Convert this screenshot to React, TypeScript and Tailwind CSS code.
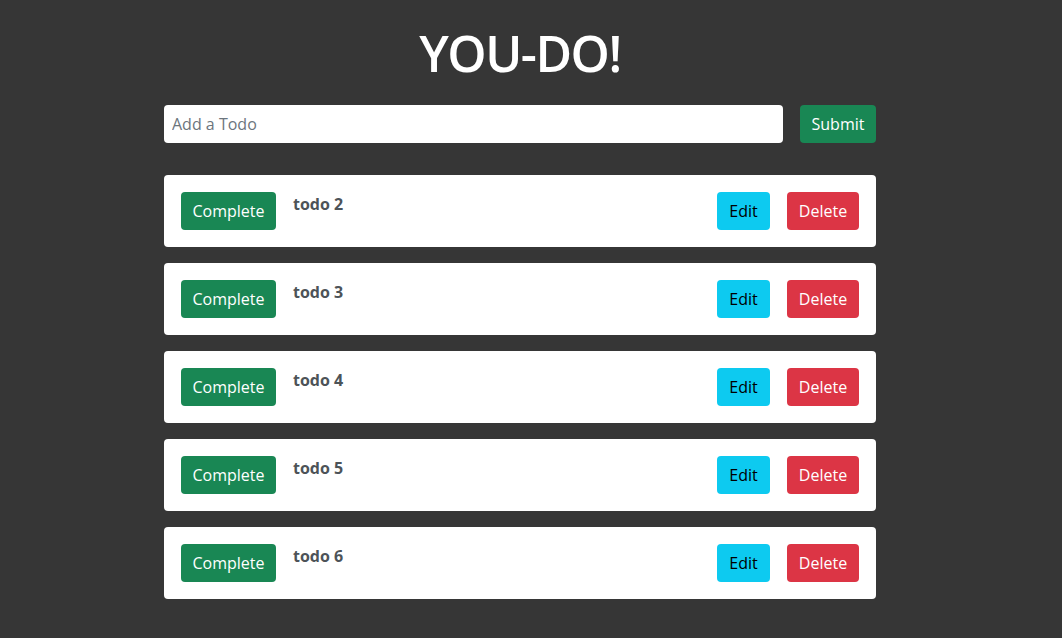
import React, { useState } from 'react';

const font = { fontFamily: '"Open Sans", "Noto Sans", "Liberation Sans", sans-serif' };

const initialTodos = ['todo 2', 'todo 3', 'todo 4', 'todo 5', 'todo 6'];

function TodoRow({ text }: { text: string }) {
  return (
    <div className="flex items-start bg-white rounded-[4px] px-[17px] py-[17px]">
      <button className="w-[95px] h-[38px] rounded-[4px] bg-[#198754] text-white text-[16px] leading-none">
        Complete
      </button>
      <span className="ml-[17px] text-[16px] leading-[24px] font-bold text-[#4d5358]">{text}</span>
      <div className="ml-auto flex gap-[17px]">
        <button className="w-[53px] h-[38px] rounded-[4px] bg-[#0dcaf0] text-black text-[16px] leading-none">
          Edit
        </button>
        <button className="w-[72px] h-[38px] rounded-[4px] bg-[#dc3545] text-white text-[16px] leading-none">
          Delete
        </button>
      </div>
    </div>
  );
}

export default function App() {
  const [value, setValue] = useState('');

  return (
    <div className="min-h-screen bg-[#363636] overflow-hidden" style={font}>
      <div className="w-[712px] ml-[164px]">
        <h1 className="pt-[23px] text-center text-white text-[50px] leading-[1.2] font-semibold tracking-[-1.5px]">
          YOU-DO!
        </h1>
        <div className="mt-[22px] flex gap-[17px]">
          <input
            value={value}
            onChange={(e) => setValue(e.target.value)}
            placeholder="Add a Todo"
            className="flex-1 h-[38px] rounded-[4px] bg-white px-[8px] text-[16px] text-[#212529] placeholder:text-[#6c757d] outline-none"
          />
          <button className="w-[76px] h-[38px] rounded-[4px] bg-[#198754] text-white text-[16px]">Submit</button>
        </div>
        <div className="mt-[32px] flex flex-col gap-[16px]">
          {initialTodos.map((t) => (
            <TodoRow key={t} text={t} />
          ))}
        </div>
      </div>
    </div>
  );
}
